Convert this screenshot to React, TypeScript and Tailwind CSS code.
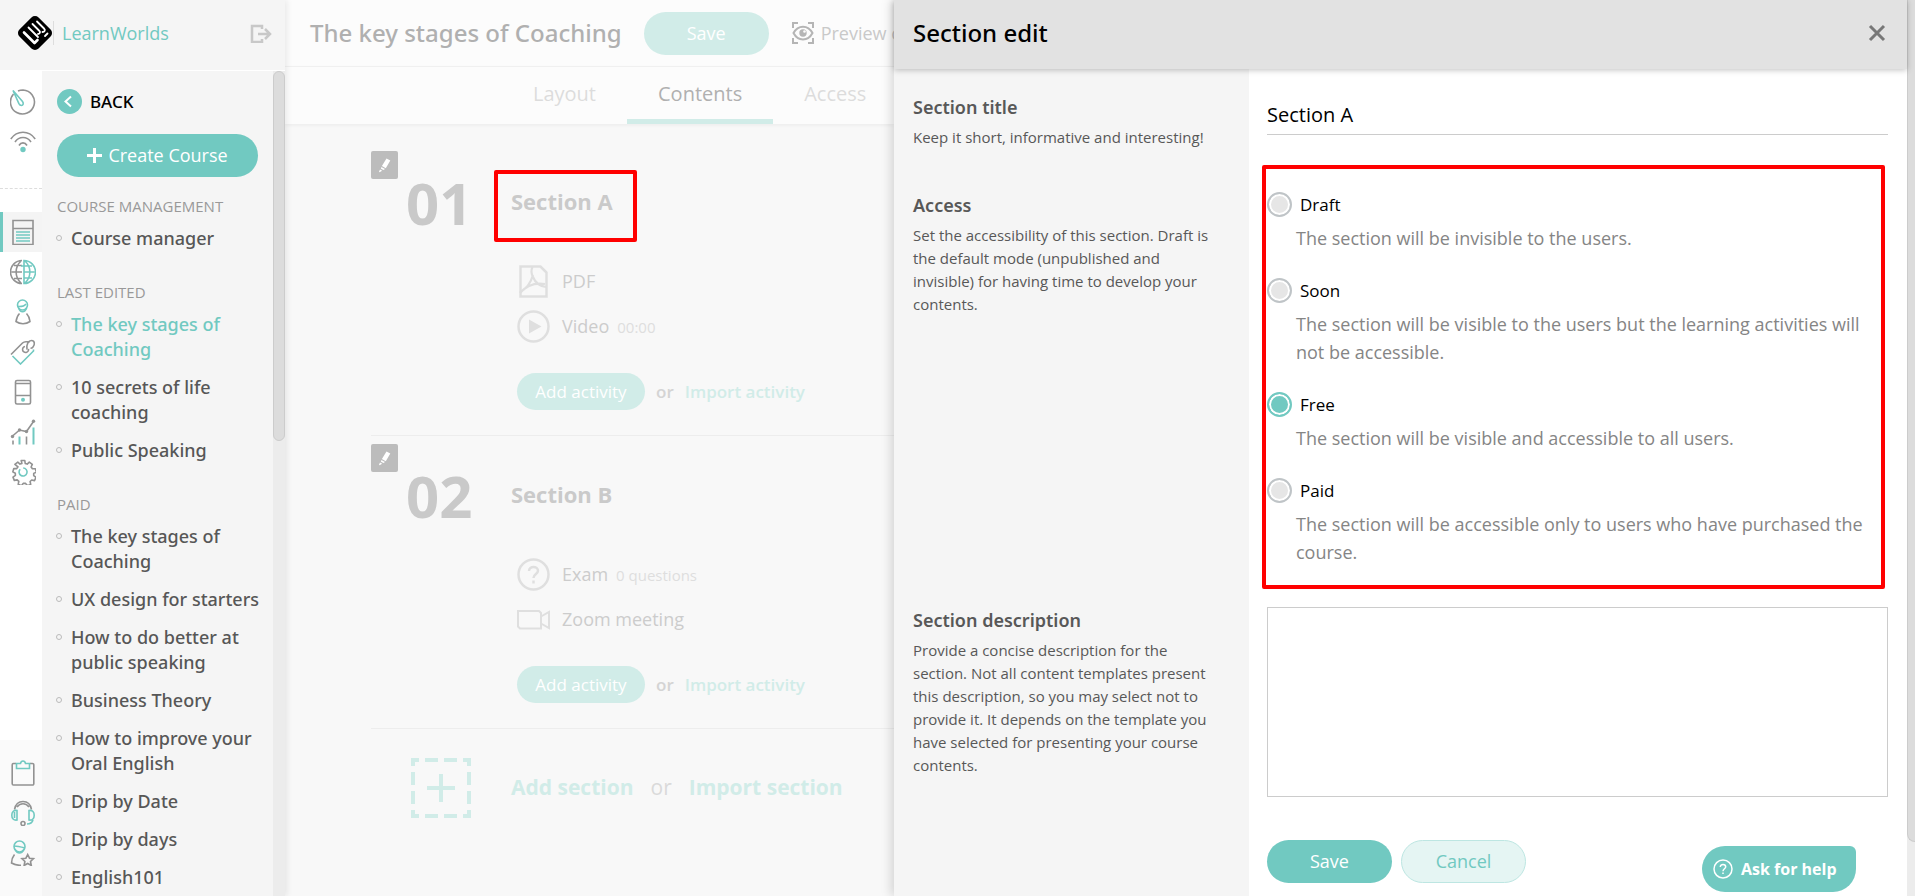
import type { ReactNode } from 'react'
import { useState } from 'react'
import { clsx } from 'clsx'

const GRAY = '#929292'
const TEAL = '#71c9c1'

type IconProps = { children: ReactNode }

function RailIcon({ children }: IconProps) {
  return (
    <svg width="26" height="26" viewBox="0 0 26 26" fill="none" stroke={GRAY} strokeWidth="1.6" aria-hidden="true">
      {children}
    </svg>
  )
}

const topRail = [
  {
    name: 'Dashboard',
    icon: (
      <RailIcon>
        <path d="M3.500 5A12 12 0 1 0 13 1C11 1 9.500 1.300 8 2" />
        <path d="M3 1.500l9.500 11c1.500 2 .5 4-1 4-1.200 0-2-.6-2.600-1.800z" stroke={TEAL} />
      </RailIcon>
    ),
  },
  {
    name: 'Live',
    icon: (
      <RailIcon>
        <path d="M.8 10C4 5.500 8 3.300 13 3.300S22 5.500 25.200 10M5 13c2-3 4.700-4.500 8-4.500s6 1.500 8 4.500M9 16.500c1-1.800 2.400-2.600 4-2.600s3 .8 4 2.600" />
        <circle cx="13" cy="20.500" r="2.700" fill={TEAL} stroke="none" />
      </RailIcon>
    ),
  },
]

const mainRail = [
  {
    name: 'Courses',
    icon: (
      <RailIcon>
        <path d="M3 1.500h20v24H3zM3 9.500h20" />
        <path d="M6 13h14M6 16h14M6 19h14M6 22h14" stroke={TEAL} />
      </RailIcon>
    ),
  },
  {
    name: 'Site',
    icon: (
      <RailIcon>
        <path d="M12 1.500A11.500 11.500 0 0 0 12 24.500M11 2C4.500 8 4.500 18 11 24M1.500 13H12M4 6.500h8M4 19.500h8" />
        <path
          d="M14 1.500a11.500 11.500 0 0 1 0 23zM15 2c6.500 6 6.500 16 0 22M14 13h10.500M11 7h11M14 19h8"
          stroke={TEAL}
        />
      </RailIcon>
    ),
  },
  {
    name: 'Users',
    icon: (
      <RailIcon>
        <path d="M9.500 14.500c-2 2-3 5-3.500 8 4 3 10 3 14 0-.4-3-1.500-6-3.500-8" />
        <circle cx="12.500" cy="6" r="5" stroke={TEAL} />
        <path d="M7.700 7.500c4 .3 7-.8 8.300-2.500M8.500 9c1 2.500 2.500 3.700 4 3.700s3.200-1.200 4.200-3.700" stroke={TEAL} />
      </RailIcon>
    ),
  },
  {
    name: 'Marketing',
    icon: (
      <RailIcon>
        <path d="M1 15.500L12.500 4c1-1 2-1.300 3.500-1.300h4M15 7.500a3 3 0 1 0 3.500 2.300M17 10.500c-1-5 1.500-9 4.500-9 3.500 0 3.500 4 1.500 6.500-.6.800-1.500 1.200-2.500 1.200" />
        <path d="M2.500 17l8 8L23.500 12v-1.500" stroke={TEAL} />
      </RailIcon>
    ),
  },
  {
    name: 'Mobile app',
    icon: (
      <RailIcon>
        <rect x="5.500" y="1.500" width="15" height="23.500" rx="1.500" />
        <path d="M5.500 4.500h15M5.500 16.500h15" />
        <circle cx="13" cy="20.700" r="2" fill={TEAL} stroke="none" />
      </RailIcon>
    ),
  },
  {
    name: 'Reports',
    icon: (
      <RailIcon>
        <path d="M2 17.500l7.500-6.500 7 1.500 7-10M3 21.500v4M16.500 17.500v8" />
        <path d="M9.500 17.500v8M23.500 8.500v17" stroke={TEAL} strokeWidth="2" />
        <g fill={GRAY} stroke="none">
          <circle cx="2.500" cy="17.500" r="1.700" />
          <circle cx="9.500" cy="11" r="1.700" />
          <circle cx="16.500" cy="12.500" r="1.700" />
          <circle cx="23.500" cy="2.200" r="1.700" />
        </g>
      </RailIcon>
    ),
  },
  {
    name: 'Settings',
    icon: (
      <RailIcon>
        <path
          strokeLinejoin="round"
          d="M11.2 1.500h3.600l.4 2.900 2 .7 2.100-2 3 2.300-1.200 2.600 1.300 1.800 2.900-.1 1 3.400-2.600 1.300v2.200l2.300 1.700-1.500 3.300-2.800-.6-1.600 1.500.6 2.900-3.300 1.300-1.800-2.300h-2.400l-1.800 2.300-3.200-1.400.6-2.900-1.600-1.500-2.900.5-1.300-3.300 2.400-1.700-.1-2.100-2.500-1.400 1-3.400 2.900.1 1.300-1.800L4.900 5.300l2.900-2.200 2.200 2 1.900-.7z"
        />
        <path d="M10.200 10.200a4 4 0 1 0 3-1.200" stroke={TEAL} />
      </RailIcon>
    ),
  },
]

const bottomRail = [
  {
    name: 'Tasks',
    icon: (
      <RailIcon>
        <path d="M6 3.500H3.500a1.300 1.300 0 0 0-1.300 1.300v18.900A1.300 1.300 0 0 0 3.500 25h19a1.300 1.300 0 0 0 1.300-1.300V4.800a1.300 1.300 0 0 0-1.300-1.300H20" />
        <path d="M6.500 3.500h4c.3-1.500 1.200-2.500 2.500-2.500s2.200 1 2.500 2.500h4v5h-13z" stroke={TEAL} />
      </RailIcon>
    ),
  },
  {
    name: 'Support',
    icon: (
      <RailIcon>
        <path d="M4.500 9.500C5.500 4 9 1.500 13 1.500s7.500 2.500 8.500 8M7 7c1.500-2.200 3.500-3.300 6-3.300s4.500 1.100 6 3.300" />
        <circle cx="13" cy="23.500" r="2" />
        <path
          d="M7 10.500c-3.500-.5-5.200 1.500-5.200 4.700S3.500 20.500 7 20zM19 10.500c3.500-.5 5.200 1.500 5.200 4.700S22.500 20.500 19 20zM23 20c-.7 2.500-2.500 4-6 4M4.500 12v6"
          stroke={TEAL}
        />
      </RailIcon>
    ),
  },
  {
    name: 'Experts',
    icon: (
      <RailIcon>
        <path d="M4.500 14.500C2.500 17 1.500 20 1.500 23c2.500 1.500 6 2.500 9.500 2.200M17.700 14.500l1.800 3.700 4 .5-3 2.800.8 4-3.600-2-3.600 2 .8-4-3-2.800 4-.5z" />
        <circle cx="9.500" cy="6.500" r="5.500" stroke={TEAL} />
        <path d="M4 6c3 0 5.500.5 11 2M5 9c1 2.500 2.500 4 4.500 4s3.500-1.500 4.500-4" stroke={TEAL} />
      </RailIcon>
    ),
  },
]

const menu = [
  { title: 'COURSE MANAGEMENT', items: ['Course manager'] },
  { title: 'LAST EDITED', items: ['The key stages of Coaching', '10 secrets of life coaching', 'Public Speaking'] },
  {
    title: 'PAID',
    items: [
      'The key stages of Coaching',
      'UX design for starters',
      'How to do better at public speaking',
      'Business Theory',
      'How to improve your Oral English',
      'Drip by Date',
      'Drip by days',
      'English101',
    ],
  },
]

const accessOptions = [
  { id: 'draft', label: 'Draft', hint: 'The section will be invisible to the users.' },
  {
    id: 'soon',
    label: 'Soon',
    hint: 'The section will be visible to the users but the learning activities will not be accessible.',
  },
  { id: 'free', label: 'Free', hint: 'The section will be visible and accessible to all users.' },
  {
    id: 'paid',
    label: 'Paid',
    hint: 'The section will be accessible only to users who have purchased the course.',
  },
]

function Logo() {
  return (
    <svg width="36" height="36" viewBox="0 0 36 36" fill="none" aria-hidden="true">
      <rect x="4.500" y="4.500" width="27" height="27" rx="5" fill="#000" transform="rotate(45 18 18)" />
      <g stroke="#fff" strokeLinecap="round" strokeLinejoin="round">
        <path d="M7 17.500l10.500 10.500 3-3" strokeWidth="2.600" />
        <path d="M11.500 12.500l9.500 9.500" strokeWidth="1.800" />
        <path d="M15.500 9l6.500 6.500c1.800 1.500 1 3.500-1 3.500M20 6.500l7 7c1.800 1.800.5 3.500-1.500 3.500M28 21l2.500-2.500" strokeWidth="1.800" />
      </g>
    </svg>
  )
}

function RailButton({ name, active, children }: { name: string; active?: boolean; children: ReactNode }) {
  return (
    <button
      type="button"
      aria-label={name}
      className={clsx(
        'flex h-10 w-full items-center justify-center border-l-3',
        active ? 'border-[#71c9c1] bg-[#f4f4f4]' : 'border-transparent',
      )}
    >
      {children}
    </button>
  )
}

function Sidebar() {
  return (
    <aside className="relative z-10 flex w-[285px] shrink-0 flex-col bg-[#f5f5f5] shadow-[2px_0_6px_rgba(0,0,0,0.08)]">
      <div className="flex h-[71px] shrink-0 items-center border-b border-white pl-[17px] pr-[13px] pb-1">
        <Logo />
        <a href="#" className="border-l border-[#dddddd] pl-2 text-[18px] leading-6 text-[#71c9c1]">
          LearnWorlds
        </a>
        <button type="button" aria-label="Log out" className="ml-auto">
          <svg width="22" height="20" viewBox="0 0 22 20" fill="none" stroke="#c8c8c8" strokeWidth="2.500" aria-hidden="true">
            <path d="M12 6V3H2v16h10v-3M8 11h11M15 6l5 5-5 5" />
          </svg>
        </button>
      </div>
      <div className="flex min-h-0 flex-1">
        <nav className="flex w-[42px] shrink-0 flex-col bg-white pt-[11px]">
          {topRail.map((item) => (
            <RailButton key={item.name} name={item.name}>
              {item.icon}
            </RailButton>
          ))}
          <div className="mt-[26px] mb-[23px] border-t border-dashed border-[#dddddd]" />
          {mainRail.map((item) => (
            <RailButton key={item.name} name={item.name} active={item.name === 'Courses'}>
              {item.icon}
            </RailButton>
          ))}
          <div className="mt-auto bg-[#fafafa] pt-[13px] pb-[23px]">
            {bottomRail.map((item) => (
              <RailButton key={item.name} name={item.name}>
                {item.icon}
              </RailButton>
            ))}
          </div>
        </nav>
        <div className="min-w-0 flex-1 overflow-hidden px-[15px]">
          <button type="button" className="mt-[18px] flex items-center gap-2 leading-[25px] text-black">
            <svg width="25" height="25" viewBox="0 0 25 25" fill="none" aria-hidden="true">
              <circle cx="12.500" cy="12.500" r="12.500" fill={TEAL} />
              <path d="M14 7.500l-5.500 5 5.500 5" stroke="#fff" strokeWidth="2" />
            </svg>
            <span className="font-['Noto_Sans'] text-[17px] font-medium">BACK</span>
          </button>
          <button
            type="button"
            className="mt-5 flex h-[43px] w-full items-center justify-center gap-1.5 rounded-full bg-[#71c9c1] text-[18px] text-white"
          >
            <svg width="15" height="15" viewBox="0 0 15 15" stroke="#fff" strokeWidth="3" aria-hidden="true">
              <path d="M7.500 0v15M0 7.500h15" />
            </svg>
            Create Course
          </button>
          <div className="-mr-2 mt-[19px] flex flex-col gap-[31px]">
            {menu.map((group) => (
              <section key={group.title}>
                <h2 className="text-[15px] leading-5 text-[#999999]">{group.title}</h2>
                <ul className="mt-2.5 flex flex-col gap-[13px]">
                  {group.items.map((item, i) => (
                    <li key={item} className="flex gap-[9px]">
                      <span className="-ml-[1px] mt-[9px] h-1.5 w-1.5 shrink-0 rounded-full border border-[#bbbbbb]" />
                      <a
                        href="#"
                        className={clsx(
                          "font-['Noto_Sans'] text-[18px] leading-[25px] font-medium",
                          group.title === 'LAST EDITED' && i === 0 ? 'text-[#71c9c1]' : 'text-[#575757]',
                        )}
                      >
                        {item}
                      </a>
                    </li>
                  ))}
                </ul>
              </section>
            ))}
          </div>
        </div>
        <div className="w-3 shrink-0 bg-[#ececec]">
          <div className="h-[370px] rounded-full border border-[#cccccc] bg-[#dcdcdc]" />
        </div>
      </div>
    </aside>
  )
}

function ActivityIcon({ children }: IconProps) {
  return (
    <svg width="33" height="33" viewBox="0 0 33 33" fill="none" stroke="#dfdfdf" strokeWidth="2.500" aria-hidden="true">
      {children}
    </svg>
  )
}

const sections = [
  {
    number: '01',
    title: 'Section A',
    marked: true,
    activities: [
      {
        name: 'PDF',
        meta: '',
        icon: (
          <ActivityIcon>
            <path d="M3.500 1.500h20l6 6v24h-26z" />
            <path d="M15.500 2c-1.500 3-1 7 .5 10 2 5 6 9 13 10M28 19c-10-1.500-19 2-25 9M16 10c-2 7-5 13-13 17" strokeWidth="2.200" />
          </ActivityIcon>
        ),
      },
      {
        name: 'Video',
        meta: '00:00',
        icon: (
          <ActivityIcon>
            <circle cx="16.500" cy="16.500" r="15" />
            <path d="M12 9.500v14l12.500-7z" fill="#dfdfdf" stroke="none" />
          </ActivityIcon>
        ),
      },
    ],
  },
  {
    number: '02',
    title: 'Section B',
    marked: false,
    activities: [
      {
        name: 'Exam',
        meta: '0 questions',
        icon: (
          <ActivityIcon>
            <circle cx="16.500" cy="16.500" r="15" />
            <path d="M12 13c0-5.500 9-5 9-.3 0 3.300-4.500 3.300-4.500 7.300M16.500 22.500v3" />
          </ActivityIcon>
        ),
      },
      {
        name: 'Zoom meeting',
        meta: '',
        icon: (
          <ActivityIcon>
            <path d="M3.500 8h18.500l2 2v15.500h-21l-2-2V8z" strokeWidth="2" />
            <path d="M24 13.500l8-4.500v16l-8-4.500" strokeWidth="2" />
          </ActivityIcon>
        ),
      },
    ],
  },
]

function Editor() {
  return (
    <main className="flex min-w-0 flex-[609] flex-col overflow-hidden bg-[#f8f8f8]">
      <header className="flex h-[67px] shrink-0 items-center border-b border-[#f3f3f3] bg-[#fcfcfc] pl-[25px] whitespace-nowrap">
        <h1 className="font-['Noto_Sans'] text-[24px] leading-8 font-medium text-[#b0b0b0]">The key stages of Coaching</h1>
        <button type="button" className="ml-[22px] h-[43px] w-[125px] shrink-0 rounded-full bg-[#d1ece8] text-[18px] text-white">
          Save
        </button>
        <button type="button" className="ml-[23px] flex items-center gap-[7px] text-[18px] text-[#c9c9c9]">
          <svg width="22" height="22" viewBox="0 0 22 22" fill="none" stroke="#b5b5b5" strokeWidth="2" aria-hidden="true">
            <path d="M1 6V1h5M16 1h5v5M21 16v5h-5M6 21H1v-5" />
            <path d="M1.500 11C6 2.500 16 2.500 20.500 11 16 19.500 6 19.500 1.500 11z" />
            <circle cx="11" cy="11" r="3.700" fill="#b5b5b5" stroke="none" />
            <circle cx="12.500" cy="9.500" r="1.300" fill="#fcfcfc" stroke="none" />
          </svg>
          Preview course
        </button>
      </header>
      <nav className="flex h-[57px] shrink-0 bg-[#fcfcfc] pl-[217px] text-[20px] shadow-[0_1px_4px_rgba(0,0,0,0.06)]">
        <a href="#" className="flex items-center px-[31px] pb-1 text-[#dcdcdc]">
          Layout
        </a>
        <a href="#" className="flex items-center border-b-5 border-[#d1ece8] px-[31px] pt-[1px] text-[#b0b0b0]">
          Contents
        </a>
        <a href="#" className="flex items-center px-[31px] pb-1 text-[#dcdcdc]">
          Access
        </a>
      </nav>
      <div className="pt-[19px] pl-[86px]">
        {sections.map((section) => (
          <section key={section.number} className="flex h-[293px] border-b border-[#ededed] pt-2">
            <button
              type="button"
              aria-label={`Edit ${section.title}`}
              className="flex h-7 w-[27px] shrink-0 items-center justify-center rounded-xs bg-[#bcbcbc]"
            >
              <svg width="14" height="16" viewBox="0 0 14 16" fill="#fff" aria-hidden="true">
                <path d="M8.500 1.500l3.800 2-4.500 7.700-3.900-2.100zM3.300 10l3.700 2-1.500 1-2.500-1.300zM2 12.500l2.200 1.200L2 15l-1 .2.200-1z" />
              </svg>
            </button>
            <div className="w-[113px] shrink-0 pt-[22px] pl-2 text-[58px] leading-[60px] font-bold text-[#c9c9c9]">
              {section.number}
            </div>
            <div className="min-w-0 flex-1 whitespace-nowrap">
              <div className="relative mt-[34px] h-8 w-[126px]">
                <h2 className="text-[22px] leading-8 font-bold text-[#cacaca]">{section.title}</h2>
                {section.marked && (
                  <div className="absolute -top-[15px] right-0 -bottom-[25px] -left-[17px] rounded-xs border-4 border-[#ff0000]" />
                )}
              </div>
              <div className="mt-12 ml-1.5 flex flex-col gap-3">
                {section.activities.map((activity) => (
                  <div key={activity.name} className="flex h-[33px] items-center">
                    {activity.icon}
                    <span className="ml-3 text-[18px] text-[#cccccc]">{activity.name}</span>
                    <span className="mt-[2px] ml-2 text-[15px] text-[#dedede]">{activity.meta}</span>
                  </div>
                ))}
              </div>
              <div className="mt-[30px] ml-1.5 flex items-center text-[17px] font-semibold">
                <button type="button" className="h-[37px] w-32 rounded-full bg-[#d1ece8] font-medium text-white">
                  Add activity
                </button>
                <span className="ml-[11px] text-[#d4d4d4]">or</span>
                <a href="#" className="ml-[11px] text-[#d1ece8]">
                  Import activity
                </a>
              </div>
            </div>
          </section>
        ))}
        <div className="flex items-center pt-[29px] pl-10 text-[21px] font-bold whitespace-nowrap text-[#d1ece8]">
          <svg width="60" height="60" viewBox="0 0 60 60" fill="none" stroke="#d1ece8" strokeWidth="4" aria-hidden="true">
            <path d="M2 8V2h6M14 2h13M33 2h13M52 2h6v6M58 14v13M58 33v13M58 52v6h-6M46 58H33M27 58H14M8 58H2v-6M2 46V33M2 27V14M30 16v28M16 30h28" />
          </svg>
          <button type="button" className="ml-10">
            Add section
          </button>
          <span className="mx-[17px] font-medium text-[#dadada]">or</span>
          <button type="button">Import section</button>
        </div>
      </div>
    </main>
  )
}

function SettingRow({ title, hint, children }: { title: string; hint: string; children: ReactNode }) {
  return (
    <div className="flex last:flex-1">
      <div className="w-[355px] shrink-0 bg-[#f5f5f5] pt-6 pr-9 pl-[19px] text-[#585858]">
        <h3 className="font-['Noto_Sans'] text-[18px] leading-7 font-semibold">{title}</h3>
        <p className="mt-[5px] text-[15px] leading-[23px]">{hint}</p>
      </div>
      <div className="min-w-0 flex-1 pt-[25px] pr-[19px] pl-[18px]">{children}</div>
    </div>
  )
}

function SectionPanel() {
  const [access, setAccess] = useState('free')

  return (
    <aside className="relative z-10 flex min-w-0 flex-[1021] bg-white shadow-[-3px_0_10px_rgba(0,0,0,0.15)]">
      <div className="flex min-w-0 flex-1 flex-col">
        <header className="z-10 flex h-[69px] shrink-0 items-center justify-between bg-[#e2e2e2] pr-[21px] pb-1 pl-[19px] shadow-[0_1px_6px_rgba(0,0,0,0.25)]">
          <h2 className="font-['Noto_Sans'] text-[24px] leading-8 font-medium text-black">Section edit</h2>
          <button type="button" aria-label="Close">
            <svg width="18" height="18" viewBox="0 0 18 18" stroke="#777777" strokeWidth="3" aria-hidden="true">
              <path d="M2 2l14 14M16 2L2 16" />
            </svg>
          </button>
        </header>

        <SettingRow title="Section title" hint="Keep it short, informative and interesting!">
          <input
            type="text"
            aria-label="Section title"
            defaultValue="Section A"
            className="mb-8 block h-[41px] w-full border-b border-[#cccccc] bg-transparent text-[20px] text-black outline-none"
          />
        </SettingRow>

        <SettingRow
          title="Access"
          hint="Set the accessibility of this section. Draft is the default mode (unpublished and invisible) for having time to develop your contents."
        >
          <div className="relative mb-4 flex flex-col gap-[26px]">
            <div className="pointer-events-none absolute -top-[27px] right-[3px] -bottom-[23px] -left-[5px] rounded-xs border-4 border-[#ff0000]" />
            {accessOptions.map((option) => (
              <div key={option.id}>
                <label className="flex items-center gap-2 text-[17px] leading-[25px] text-black">
                  <input
                    type="radio"
                    name="access"
                    checked={access === option.id}
                    onChange={() => setAccess(option.id)}
                    className="h-[25px] w-[25px] shrink-0 appearance-none rounded-full border-2 border-[#bfc4c7] bg-[#e6e6e6] shadow-[inset_0_0_0_2px_white] checked:border-[#71c9c1] checked:bg-[#71c9c1]"
                  />
                  {option.label}
                </label>
                <p className="mt-[7px] mr-6 ml-[29px] text-[18px] leading-7 text-[#858585]">{option.hint}</p>
              </div>
            ))}
          </div>
        </SettingRow>

        <SettingRow
          title="Section description"
          hint="Provide a concise description for the section. Not all content templates present this description, so you may select not to provide it. It depends on the template you have selected for presenting your course contents."
        >
          <textarea
            aria-label="Section description"
            className="block h-[190px] w-full resize-none border border-[#cccccc] outline-none"
          />
          <div className="mt-[43px] flex gap-[9px] text-[18px]">
            <button type="button" className="h-[43px] w-[125px] rounded-full bg-[#71c9c1] text-white">
              Save
            </button>
            <button
              type="button"
              className="h-[43px] w-[125px] rounded-full border border-[#bde6e2] bg-[#e5f5f3] text-[#71c9c1]"
            >
              Cancel
            </button>
          </div>
        </SettingRow>
      </div>

      <div className="w-2 shrink-0 bg-[#ececec]">
        <div className="h-[842px] rounded-bl-lg border-b border-l border-[#cccccc] bg-[#dcdcdc]" />
      </div>

      <button
        type="button"
        className="absolute right-[59px] bottom-1 flex h-[46px] w-[154px] items-center gap-2 rounded-[23px] rounded-tr-md bg-[#71c9c1] pl-[11px] text-[16px] font-bold text-white"
      >
        <svg width="20" height="20" viewBox="0 0 20 20" fill="none" stroke="#fff" strokeWidth="1.500" aria-hidden="true">
          <circle cx="10" cy="10" r="9" />
          <path d="M7.300 8c0-3.500 5.400-3.200 5.400-.2 0 2-2.700 2-2.700 4.400M10 13.500v1.500" />
        </svg>
        Ask for help
      </button>
    </aside>
  )
}

export default function App() {
  return (
    <div className="flex h-screen overflow-hidden bg-white font-['Open_Sans','Noto_Sans',sans-serif]">
      <Sidebar />
      <Editor />
      <SectionPanel />
    </div>
  )
}
